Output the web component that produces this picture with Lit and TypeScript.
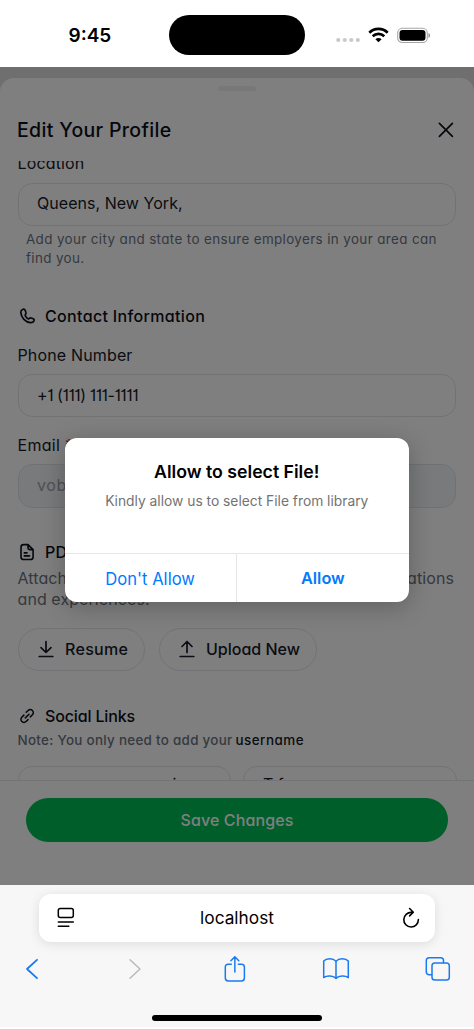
import { LitElement, html, css, svg } from "lit";
import { customElement } from "lit/decorators.js";

const icon = (w: number, h: number, body: unknown, sw = 1.7) => html`<svg
  width=${w} height=${h} viewBox="0 0 ${w} ${h}" fill="none" stroke="currentColor"
  stroke-width=${sw} stroke-linecap="round" stroke-linejoin="round">${body}</svg>`;

const icons = {
  close: icon(16, 16, svg`<path d="M1.4 1.4 14.4 14.4M14.4 1.4 1.4 14.4"/>`, 1.7),
  phone: icon(18, 18, svg`<path d="M4.6 2.5C3.4 3 2.7 4 2.8 5.400C3.100 10.600 7.400 15.200 12.700 15.600C14.200 15.700 15.300 15 15.900 14C16.400 13 16.100 12.100 15.200 11.700L13.400 11C12.700 10.700 12 10.800 11.500 11.300C10.900 11.900 10.100 11.900 9.400 11.300C8.600 10.600 8 9.900 7.400 9C7 8.300 7.100 7.700 7.600 7.200C8.100 6.700 8.200 6 7.900 5.300L7.200 3.500C6.700 2.300 5.700 1.900 4.600 2.500Z"/>`, 1.7),
  doc: icon(18, 18, svg`<path d="M10 1.6H5.6C4 1.6 3 2.6 3 4.2V13.9C3 15.5 4 16.5 5.6 16.5H12.5C14.1 16.5 15.1 15.5 15.1 13.9V6.6L10 1.6V4.4C10 5.8 10.8 6.6 12.2 6.6H15.1M6.3 9.9H9M6.3 12.9H11.5"/>`, 1.6),
  link: icon(18, 18, svg`<path d="M7.3 10.9 11 7.2M8.2 5.3 10.1 3.5C11.3 2.3 13.2 2.3 14.4 3.5C15.6 4.7 15.6 6.6 14.4 7.8L12.3 9.9M10 12.6 8.1 14.5C6.9 15.7 5 15.7 3.8 14.5C2.6 13.3 2.6 11.4 3.8 10.2L5.9 8.1"/>`, 1.5),
  down: icon(16, 18, svg`<path d="M8 1.5V12.3M3 7.6 8 12.5 13 7.6M1.2 16.5H14.8"/>`, 1.7),
  up: icon(16, 18, svg`<path d="M8 12.5V1.6M3 6.5 8 1.5 13 6.5M1.2 16.5H14.8"/>`, 1.7),
  reader: icon(18, 21, svg`<rect x="1.3" y="1.5" width="15" height="9" rx="2"/><path d="M1.3 14.9H16.3M1.3 19.3H11.8"/>`, 1.5),
  reload: icon(18, 22, svg`<path d="M9.5 5.4A7.3 7.3 0 1 0 16.4 12.6M7.6 1.5 11.3 5.3 7.6 8.9"/>`, 1.6),
  back: icon(14, 22, svg`<path d="M12 1.8 2 11 12 20.2"/>`, 1.8),
  forward: icon(14, 22, svg`<path d="M2 1.8 12 11 2 20.2"/>`, 1.5),
  share: icon(22, 28, svg`<path d="M7.3 9.2H4.2C2.3 9.2 1.3 10.2 1.3 12V23C1.3 24.8 2.3 25.9 4.2 25.9H17.5C19.3 25.9 20.4 24.8 20.4 23V12C20.4 10.2 19.3 9.2 17.5 9.2H14.4M10.85 17V2M6.9 5.7 10.85 1.7 14.8 5.7"/>`, 1.5),
  book: icon(28, 24, svg`<path d="M14 4.2C11 .9 4.5 .9 1.7 4V20.6C4.8 18.4 11 18.4 14 21.4C17 18.4 23.2 18.4 26.3 20.6V4C23.5 .9 17 .9 14 4.2ZM14 4.2V21.4"/>`, 1.5),
  tabs: icon(26, 26, svg`<path d="M6.7 18.7H4.2C2.4 18.7 1.3 17.6 1.3 15.9V4.5C1.3 2.7 2.4 1.7 4.2 1.7H15.7C17.5 1.7 18.5 2.7 18.5 4.5V6.7"/><rect x="7" y="7" width="17.3" height="17" rx="2.8"/>`, 1.5),
};

@customElement("status-bar")
class StatusBar extends LitElement {
  static styles = css`
    :host { display: grid; grid-template-columns: 169px 136px 1fr; height: 67px; background: #fff; box-sizing: border-box; }
    .time { padding-left: 68.5px; font-weight: 600; font-size: 19px; line-height: 24px; margin-top: 24px; }
    .island { height: 40px; margin-top: 15px; border-radius: 20px; background: #000; }
    .signals { display: flex; padding-left: 31px; margin-top: 24px; height: 22px; align-items: center; }
    .wifi { margin-left: 8px; }
    .battery { margin-left: 8px; }
  `;
  render() {
    return html`
      <div class="time">9:45</div>
      <div class="island"></div>
      <div class="signals">
        <svg width="24" height="22" viewBox="0 0 24 22" fill="#c9c9c9">
          <circle cx="2.3" cy="16" r="2.1"/><circle cx="8.8" cy="16" r="2.1"/><circle cx="15.3" cy="16" r="2.1"/><circle cx="21.8" cy="16" r="2.1"/>
        </svg>
        <svg class="wifi" width="21" height="16" viewBox="0 0 21 16" fill="none" stroke="#000" stroke-width="2.7">
          <path d="M1.3 5.7C6.5 .6 14.5 .6 19.7 5.7"/><path d="M4.7 9.2C8 6.1 13 6.1 16.3 9.2"/>
          <path d="M10.5 15.3 7.4 12.2C9.2 10.6 11.8 10.6 13.6 12.2Z" fill="#000" stroke="none"/>
        </svg>
        <svg class="battery" width="34" height="17" viewBox="0 0 34 17">
          <rect x=".7" y="1.2" width="29.6" height="14.3" rx="4.6" fill="none" stroke="#a6a6a6" stroke-width="1.1"/>
          <rect x="2.5" y="3" width="26" height="10.7" rx="3"/>
          <path d="M31.5 6V11C33.5 10.2 33.5 6.8 31.5 6Z" fill="#8a8a8a"/>
        </svg>
      </div>`;
  }
}

@customElement("profile-sheet")
class ProfileSheet extends LitElement {
  static styles = css`
    :host { display: flex; flex-direction: column; height: 807px; background: #fff; border-radius: 14px 14px 0 0; color: #151a26; overflow: hidden;
      font-size: 16px; font-feature-settings: "cv11", "cv01"; }
    svg { display: block; flex: none; }
    .handle { width: 38px; height: 5px; border-radius: 3px; background: #f0f0f0; margin: 8px auto 0; flex: none; }
    .head { display: flex; justify-content: space-between; align-items: center; height: 30px; margin: 24px 20px 0 17px; flex: none; color: #0b0f1a; }
    .title { font-size: 19.5px; font-weight: 500; letter-spacing: .33px; }
    .scroll { flex: none; height: 619px; margin-top: 16px; overflow: hidden; padding: 0 17.5px; }
    .scroll > * { box-sizing: border-box; }
    .label { height: 22px; line-height: 22px; letter-spacing: .15px; }
    .location { margin-top: -9px; }
    .field { height: 43px; line-height: 39px; border: 1px solid #e3e5e9; border-radius: 14px; padding-left: 18.5px; margin: 8px .5px 0 0; letter-spacing: .04px; }
    .location + .field { margin-top: 9px; }
    .disabled { background: #f0f4f7; border-color: #dfe5eb; color: #9ca3af; height: 43.5px; margin-top: 7.5px; letter-spacing: .6px; line-height: 40px; }
    .help { font-size: 13.4px; line-height: 18.5px; margin: 4px 0 0 8.5px; padding-bottom: .5px; color: #6b7280; letter-spacing: .38px; white-space: nowrap; }
    .section { display: flex; align-items: center; height: 22px; font-weight: 500; gap: 9.5px; letter-spacing: .34px; color: #0b0f1a; }
    .contact { margin-top: 37.5px; }
    .phone { margin-top: 17px; }
    .number { letter-spacing: -.45px; line-height: 40px; }
    .email { margin-top: 17.5px; letter-spacing: .3px; line-height: 20.5px; }
    .pdf { margin-top: 33.5px; margin-bottom: .5px; }
    .social { margin-top: 34px; margin-bottom: .5px; letter-spacing: -.15px; }
    .desc { margin-top: 4.5px; line-height: 21.5px; color: #6b7280; letter-spacing: .08px; }
    .spread { display: flex; justify-content: space-between; padding-right: 2.5px; }
    .files { display: flex; gap: 13.5px; margin-top: 17px; }
    .pill { display: flex; align-items: center; box-sizing: border-box; width: 127.5px; height: 43px; border: 1px solid #e3e5e9; border-radius: 22px; padding-left: 19px; gap: 11.5px; font-weight: 500; letter-spacing: .3px; white-space: nowrap; }
    .upload { width: 158px; letter-spacing: 0; }
    .note { font-size: 13.4px; font-weight: 500; line-height: 18px; margin-top: 4.5px; color: #6b7280; letter-spacing: .3px; white-space: nowrap; }
    .note b { font-weight: 500; color: #151a26; letter-spacing: .5px; margin-left: -1px; }
    .links { display: grid; grid-template-columns: 213.5px 213.5px; gap: 12px; margin-top: 17px; }
    .link { height: 43px; border: 1px solid #e3e5e9; border-radius: 14px; box-sizing: border-box; padding: 7.5px 19px; line-height: 18px; }
    .link.first { padding-left: 154px; padding-top: 8px; }
    .footer { flex: 1; border-top: 1.5px solid #e6e8eb; padding: 16.5px 26px 0; }
    .save { height: 44px; border-radius: 22px; background: #00bd54; color: #fff; display: grid; place-items: center; font-weight: 500; letter-spacing: .12px; }
  `;
  render() {
    return html`
      <div class="handle"></div>
      <div class="head"><span class="title">Edit Your Profile</span>${icons.close}</div>
      <div class="scroll">
        <div class="label location">Location</div>
        <div class="field">Queens, New York,</div>
        <div class="help">Add your city and state to ensure employers in your area can<br>find you.</div>
        <div class="section contact">${icons.phone}<span>Contact Information</span></div>
        <div class="label phone">Phone Number</div>
        <div class="field number">+1 (111) 111-1111</div>
        <div class="label email">Email *</div>
        <div class="field disabled">vob</div>
        <div class="section pdf">${icons.doc}<span>PDF</span></div>
        <div class="desc"><div class="spread"><span>Attach</span><span>qualifications</span></div>and experiences.</div>
        <div class="files">
          <div class="pill">${icons.down}<span>Resume</span></div>
          <div class="pill upload">${icons.up}<span>Upload New</span></div>
        </div>
        <div class="section social">${icons.link}<span>Social Links</span></div>
        <div class="note">Note: You only need to add your <b>username</b></div>
        <div class="links"><div class="link first">i</div><div class="link">T f</div></div>
      </div>
      <div class="footer"><div class="save">Save Changes</div></div>`;
  }
}

@customElement("permission-dialog")
class PermissionDialog extends LitElement {
  static styles = css`
    :host { display: flex; flex-direction: column; width: 344.5px; height: 164.5px; box-sizing: border-box; background: #fff; border-radius: 12px; overflow: hidden; text-align: center; box-shadow: 0 5px 24px rgba(0,0,0,.24); }
    .title { font-size: 17.7px; font-weight: 600; line-height: 24px; margin-top: 22px; color: #000; }
    .text { font-size: 13.8px; line-height: 18px; margin-top: 8px; color: #737373; }
    .actions { display: grid; grid-template-columns: 1fr 1fr; height: 48px; margin-top: auto; border-top: 1px solid #e6e6e6; line-height: 50px; color: #007aff; font-size: 16.6px; }
    .deny { border-right: 1px solid #e6e6e6; }
    .allow { font-weight: 600; font-size: 16.3px; line-height: 49px; }
  `;
  render() {
    return html`
      <div class="title">Allow to select File!</div>
      <div class="text">Kindly allow us to select File from library</div>
      <div class="actions"><div class="deny">Don't Allow</div><div class="allow">Allow</div></div>`;
  }
}

@customElement("browser-bar")
class BrowserBar extends LitElement {
  static styles = css`
    :host { display: flex; flex-direction: column; height: 142px; background: #f7f7f7; overflow: hidden; }
    svg { display: block; }
    .url { display: flex; align-items: center; justify-content: space-between; box-sizing: border-box; height: 48.5px; margin: 8.5px 39px 0; padding: 0 15px 0 18px; background: #fff; border-radius: 12px; box-shadow: 0 2px 12px rgba(0,0,0,.11); font-size: 17.3px; color: #000; }
    .host { margin-right: 3px; }
    .tools { display: grid; grid-template-columns: repeat(5, 101.5px); place-items: center; height: 28px; margin: 12.5px 0 0 -19px; color: #1a7af0; }
    .off { color: #b9b9b9; padding-left: 3px; }
    .home { width: 170px; height: 5.5px; border-radius: 3px; background: #000; margin: 32.5px auto 0; }
  `;
  render() {
    return html`
      <div class="url">${icons.reader}<span class="host">localhost</span>${icons.reload}</div>
      <div class="tools">${icons.back}<span class="off">${icons.forward}</span>${icons.share}${icons.book}${icons.tabs}</div>
      <div class="home"></div>`;
  }
}

@customElement("app-root")
class AppRoot extends LitElement {
  static styles = css`
    :host { display: block; height: 1029px; background: #fff; font-family: Inter, "Liberation Sans", sans-serif; color: #000; overflow: hidden; }
    .page { position: relative; height: 818px; box-sizing: border-box; padding-top: 11px; background: #dedede; }
    .overlay { position: absolute; inset: 0; background: rgba(0,0,0,.5); padding: 370.5px 0 0 64.5px; }
  `;
  render() {
    return html`
      <status-bar></status-bar>
      <div class="page">
        <profile-sheet></profile-sheet>
        <div class="overlay"><permission-dialog></permission-dialog></div>
      </div>
      <browser-bar></browser-bar>`;
  }
}
